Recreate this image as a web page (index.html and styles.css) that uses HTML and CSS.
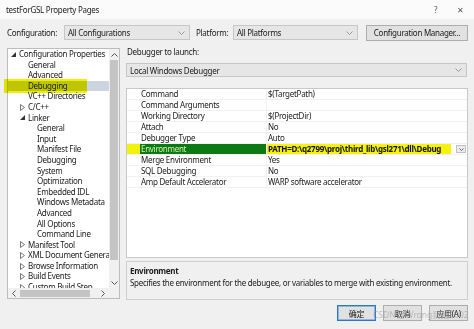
FILE: index.html
```html
<!DOCTYPE html>
<html lang="en">
<head>
    <meta charset="UTF-8">
    <title>testForGSL Property Pages</title>
    <link rel="stylesheet" href="styles.css">
</head>
<body>
<div class="window">
    <div class="titlebar">
        <span class="title">testForGSL Property Pages</span>
        <span class="title-btns"><span class="help">?</span><span class="close">✕</span></span>
    </div>

    <div class="toolbar">
        <span class="lbl lbl-config">Configuration:</span>
        <div class="combo combo-config">
            <span>All Configurations</span>
            <svg width="7" height="4"><path d="M0.5 0.5 L3.5 3.5 L6.5 0.5" fill="none" stroke="#999"/></svg>
        </div>
        <span class="lbl lbl-platform">Platform:</span>
        <div class="combo combo-platform">
            <span>All Platforms</span>
            <svg width="7" height="4"><path d="M0.5 0.5 L3.5 3.5 L6.5 0.5" fill="none" stroke="#999"/></svg>
        </div>
        <button class="btn btn-manager">Configuration Manager...</button>
    </div>

    <div class="main">
        <div class="tree">
            <ul class="tree-items">
                <li class="lvl0"><span class="twisty"><svg width="5" height="5"><polygon points="5,0 5,5 0,5" fill="#333"/></svg></span>Configuration Properties</li>
                <li class="lvl1"><span class="twisty"></span>General</li>
                <li class="lvl1"><span class="twisty"></span>Advanced</li>
                <li class="lvl1 selected"><span class="twisty"></span>Debugging</li>
                <li class="lvl1"><span class="twisty"></span>VC++ Directories</li>
                <li class="lvl1"><span class="twisty"><svg width="5" height="7"><polygon points="0.5,0.5 4.5,3.5 0.5,6.5" fill="none" stroke="#777"/></svg></span>C/C++</li>
                <li class="lvl1"><span class="twisty"><svg width="5" height="5"><polygon points="5,0 5,5 0,5" fill="#333"/></svg></span>Linker</li>
                <li class="lvl2"><span class="twisty"></span>General</li>
                <li class="lvl2"><span class="twisty"></span>Input</li>
                <li class="lvl2"><span class="twisty"></span>Manifest File</li>
                <li class="lvl2"><span class="twisty"></span>Debugging</li>
                <li class="lvl2"><span class="twisty"></span>System</li>
                <li class="lvl2"><span class="twisty"></span>Optimization</li>
                <li class="lvl2"><span class="twisty"></span>Embedded IDL</li>
                <li class="lvl2"><span class="twisty"></span>Windows Metadata</li>
                <li class="lvl2"><span class="twisty"></span>Advanced</li>
                <li class="lvl2"><span class="twisty"></span>All Options</li>
                <li class="lvl2"><span class="twisty"></span>Command Line</li>
                <li class="lvl1"><span class="twisty"><svg width="5" height="7"><polygon points="0.5,0.5 4.5,3.5 0.5,6.5" fill="none" stroke="#777"/></svg></span>Manifest Tool</li>
                <li class="lvl1"><span class="twisty"><svg width="5" height="7"><polygon points="0.5,0.5 4.5,3.5 0.5,6.5" fill="none" stroke="#777"/></svg></span>XML Document Generator</li>
                <li class="lvl1"><span class="twisty"><svg width="5" height="7"><polygon points="0.5,0.5 4.5,3.5 0.5,6.5" fill="none" stroke="#777"/></svg></span>Browse Information</li>
                <li class="lvl1"><span class="twisty"><svg width="5" height="7"><polygon points="0.5,0.5 4.5,3.5 0.5,6.5" fill="none" stroke="#777"/></svg></span>Build Events</li>
                <li class="lvl1"><span class="twisty"><svg width="5" height="7"><polygon points="0.5,0.5 4.5,3.5 0.5,6.5" fill="none" stroke="#777"/></svg></span>Custom Build Step</li>
            </ul>
            <div class="vscroll">
                <svg width="7" height="4"><path d="M0.5 3.5 L3.5 0.5 L6.5 3.5" fill="none" stroke="#555"/></svg>
                <div class="vthumb"></div>
                <svg width="7" height="4"><path d="M0.5 0.5 L3.5 3.5 L6.5 0.5" fill="none" stroke="#555"/></svg>
            </div>
            <div class="hscroll">
                <svg width="4" height="7"><path d="M3.5 0.5 L0.5 3.5 L3.5 6.5" fill="none" stroke="#555"/></svg>
                <div class="hthumb"></div>
                <svg width="4" height="7"><path d="M0.5 0.5 L3.5 3.5 L0.5 6.5" fill="none" stroke="#555"/></svg>
            </div>
            <div class="corner"></div>
        </div>

        <div class="pane">
            <div class="pane-label">Debugger to launch:</div>
            <div class="combo combo-debugger">
                <span>Local Windows Debugger</span>
                <svg width="7" height="4"><path d="M0.5 0.5 L3.5 3.5 L6.5 0.5" fill="none" stroke="#999"/></svg>
            </div>
            <div class="grid">
                <div class="row"><span class="gutter"></span><span class="name">Command</span><span class="value">$(TargetPath)</span></div>
                <div class="row"><span class="gutter"></span><span class="name">Command Arguments</span><span class="value"></span></div>
                <div class="row"><span class="gutter"></span><span class="name">Working Directory</span><span class="value">$(ProjectDir)</span></div>
                <div class="row"><span class="gutter"></span><span class="name">Attach</span><span class="value">No</span></div>
                <div class="row"><span class="gutter"></span><span class="name">Debugger Type</span><span class="value">Auto</span></div>
                <div class="row row-active">
                    <span class="gutter"></span>
                    <span class="name">Environment</span>
                    <span class="value"><span class="edit">PATH=D:\q2799\proj\third_lib\gsl271\dll\Debug</span><span class="drop"><svg width="5" height="3"><path d="M0.5 0.5 L2.5 2.5 L4.5 0.5" fill="none" stroke="#666"/></svg></span></span>
                </div>
                <div class="row"><span class="gutter"></span><span class="name">Merge Environment</span><span class="value">Yes</span></div>
                <div class="row"><span class="gutter"></span><span class="name">SQL Debugging</span><span class="value">No</span></div>
                <div class="row"><span class="gutter"></span><span class="name">Amp Default Accelerator</span><span class="value">WARP software accelerator</span></div>
            </div>
            <div class="desc">
                <div class="desc-title">Environment</div>
                <div class="desc-text">Specifies the environment for the debugee, or variables to merge with existing environment.</div>
            </div>
        </div>
    </div>

    <div class="footer">
        <button class="btn btn-default">确定</button>
        <button class="btn">取消</button>
        <button class="btn">应用(A)</button>
    </div>

    <div class="mark mark-tree"></div>
    <div class="watermark">CSDN @Wrong我姓E002</div>
</div>
</body>
</html>
```

FILE: styles.css
```css
html, body {
    margin: 0;
    padding: 0;
}

body {
    font-family: "Noto Sans", "Noto Sans CJK SC", sans-serif;
    font-size: 8px;
    letter-spacing: -0.28px;
    color: #1a1a1a;
}

.window {
    position: relative;
    width: 474px;
    height: 329px;
    background: #f0f0f0;
    overflow: hidden;
}

.titlebar {
    height: 19px;
    background: #fbfbfb;
    display: flex;
    align-items: center;
    justify-content: space-between;
    padding: 0 10px 0 6px;
}
.title {
    font-size: 8px;
    color: #222;
}
.title-btns {
    display: flex;
    gap: 20px;
    color: #555;
    font-size: 8px;
}

.toolbar {
    height: 27px;
    display: flex;
    align-items: center;
    padding-left: 7px;
}
.lbl-config {
    width: 57px;
}
.lbl-platform {
    margin-left: 6px;
    width: 37px;
}

.combo {
    height: 15px;
    box-sizing: border-box;
    background: #e6e6e6;
    border: 1px solid #c6c6c6;
    display: flex;
    align-items: center;
    justify-content: space-between;
    padding: 0 4px 0 3px;
}
.combo-config {
    width: 126px;
}
.combo-platform {
    width: 125px;
}

.btn {
    font-family: inherit;
    font-size: 8px;
    letter-spacing: inherit;
    color: #1a1a1a;
    background: #e1e1e1;
    border: 1px solid #adadad;
    box-sizing: border-box;
    padding: 0;
    height: 16px;
    width: 39px;
}
.btn-manager {
    margin-left: 8px;
    width: 102px;
    height: 16px;
}
.btn-default {
    border: 1px solid #2b78c5;
    box-shadow: inset 0 0 0 1px #8fb6dc;
}

.main {
    display: flex;
    align-items: flex-start;
    padding-left: 7px;
    height: 255px;
}

.tree {
    margin-top: 2px;
    width: 113px;
    height: 251px;
    box-sizing: border-box;
    border: 1px solid #bcbcbc;
    background: #fff;
    display: grid;
    grid-template-columns: 1fr 10px;
    grid-template-rows: 1fr 10px;
}
.tree-items {
    list-style: none;
    margin: 0;
    padding: 0;
    overflow: hidden;
    white-space: nowrap;
}
.tree-items li {
    height: 10.6px;
    line-height: 10.6px;
    display: flex;
    align-items: center;
}
.twisty {
    width: 8px;
    flex: none;
    display: flex;
    align-items: center;
}
.lvl0 { padding-left: 3px; }
.lvl1 { padding-left: 12px; }
.lvl2 { padding-left: 21px; }
.tree-items li.selected {
    background: #ccd3e1;
}

.vscroll {
    background: #f0f0f0;
    display: flex;
    flex-direction: column;
    align-items: center;
    justify-content: space-between;
    padding: 4px 0 3px;
}
.vthumb {
    width: 8px;
    height: 200px;
    background: #c4c4c4;
    margin-bottom: 18px;
}
.hscroll {
    background: #f0f0f0;
    display: flex;
    align-items: center;
    padding: 0 4px 0 4px;
}
.hthumb {
    width: 70px;
    height: 7px;
    background: #c4c4c4;
    margin: 0 auto 0 4px;
}
.corner {
    background: #f0f0f0;
}

.pane {
    margin-left: 6px;
    width: 342px;
    padding-top: 1px;
    display: flex;
    flex-direction: column;
}
.pane-label {
    height: 10px;
    line-height: 10px;
    padding-left: 1px;
}
.combo-debugger {
    margin-top: 6px;
    height: 14px;
    width: 341px;
}

.grid {
    margin-top: 11px;
    height: 170px;
    box-sizing: border-box;
    border: 1px solid #c8c8c8;
    background: #fff;
}
.row {
    height: 11px;
    display: flex;
    align-items: stretch;
    border-bottom: 1px solid #f1f1f1;
    box-sizing: border-box;
    line-height: 10px;
}
.gutter {
    width: 13px;
    flex: none;
}
.name {
    width: 127px;
    flex: none;
    padding-left: 1px;
    box-sizing: border-box;
    border-right: 1px solid #f1f1f1;
}
.value {
    flex: 1;
    padding-left: 1px;
    display: flex;
    align-items: center;
}

.row-active .gutter {
    background: #f2f20c;
}
.row-active .name {
    background: #0c7a12;
    color: #d6efb4;
}
.row-active .value {
    padding-left: 0;
}
.edit {
    width: 184px;
    height: 100%;
    background: #f7f20a;
    font-weight: bold;
    color: #111;
    padding-left: 1px;
    box-sizing: border-box;
    white-space: nowrap;
    overflow: hidden;
}
.drop {
    margin-left: 5px;
    width: 10px;
    height: 8px;
    box-sizing: border-box;
    border: 1px solid #c0c0c0;
    background: #ececec;
    display: flex;
    align-items: center;
    justify-content: center;
}

.desc {
    margin-top: 3px;
    height: 39px;
    box-sizing: border-box;
    border: 1px solid #cfcfcf;
    padding: 3px 3px;
    line-height: 12px;
}
.desc-title {
    font-weight: bold;
}

.footer {
    display: flex;
    justify-content: flex-end;
    gap: 7px;
    padding: 4px 6px 0 0;
}

/* yellow highlighter strokes drawn over the screenshot */
.mark {
    position: absolute;
    background: #eef000;
    mix-blend-mode: multiply;
}
.mark-tree {
    left: 4px;
    top: 79px;
    width: 83px;
    height: 14px;
}

.watermark {
    position: absolute;
    left: 373px;
    top: 308px;
    font-size: 8.5px;
    letter-spacing: 0;
    color: rgba(150, 150, 150, 0.55);
    white-space: nowrap;
}
```
